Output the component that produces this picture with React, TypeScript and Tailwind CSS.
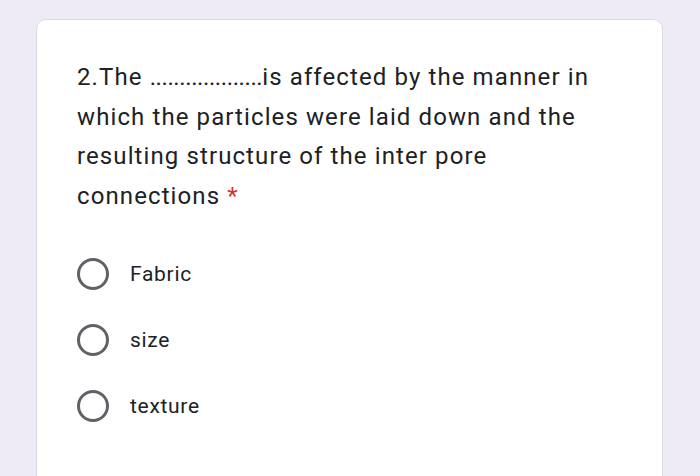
import { useState } from 'react';

const options = ['Fabric', 'size', 'texture'];

const lines = [
  'which the particles were laid down and the',
  'resulting structure of the inter pore',
];

export default function App() {
  const [picked, setPicked] = useState<string | null>(null);

  return (
    <div className="h-[476px] overflow-hidden bg-[#eeebf6] pt-[19px] pl-[36px] pr-[37px] font-['Roboto',sans-serif]">
      <div className="h-[480px] rounded-[10px] border border-[#dcdae3] bg-white pl-[40px] pr-[10px] pt-[38px]">
        <div className="text-[24px] leading-[39.5px] tracking-[1.1px] text-[#202124]">
          <p className="whitespace-nowrap">
            2.The <span className="tracking-[-0.4px]">...................</span>is affected by the manner in
          </p>
          {lines.map((l) => (
            <p key={l} className="whitespace-nowrap">{l}</p>
          ))}
          <p className="whitespace-nowrap">
            connections <span className="text-[#d93025]">*</span>
          </p>
        </div>

        <div className="mt-[42px] flex flex-col gap-[34px]">
          {options.map((o) => (
            <label key={o} className="flex cursor-pointer items-center gap-[21px]" onClick={() => setPicked(o)}>
              <span className="flex h-[32px] w-[32px] items-center justify-center rounded-full border-[3px] border-[#5f6368]">
                {picked === o && <span className="h-[14px] w-[14px] rounded-full bg-[#673ab7]" />}
              </span>
              <span className="text-[21px] leading-[32px] tracking-[0.7px] text-[#202124]">{o}</span>
            </label>
          ))}
        </div>
      </div>
    </div>
  );
}
